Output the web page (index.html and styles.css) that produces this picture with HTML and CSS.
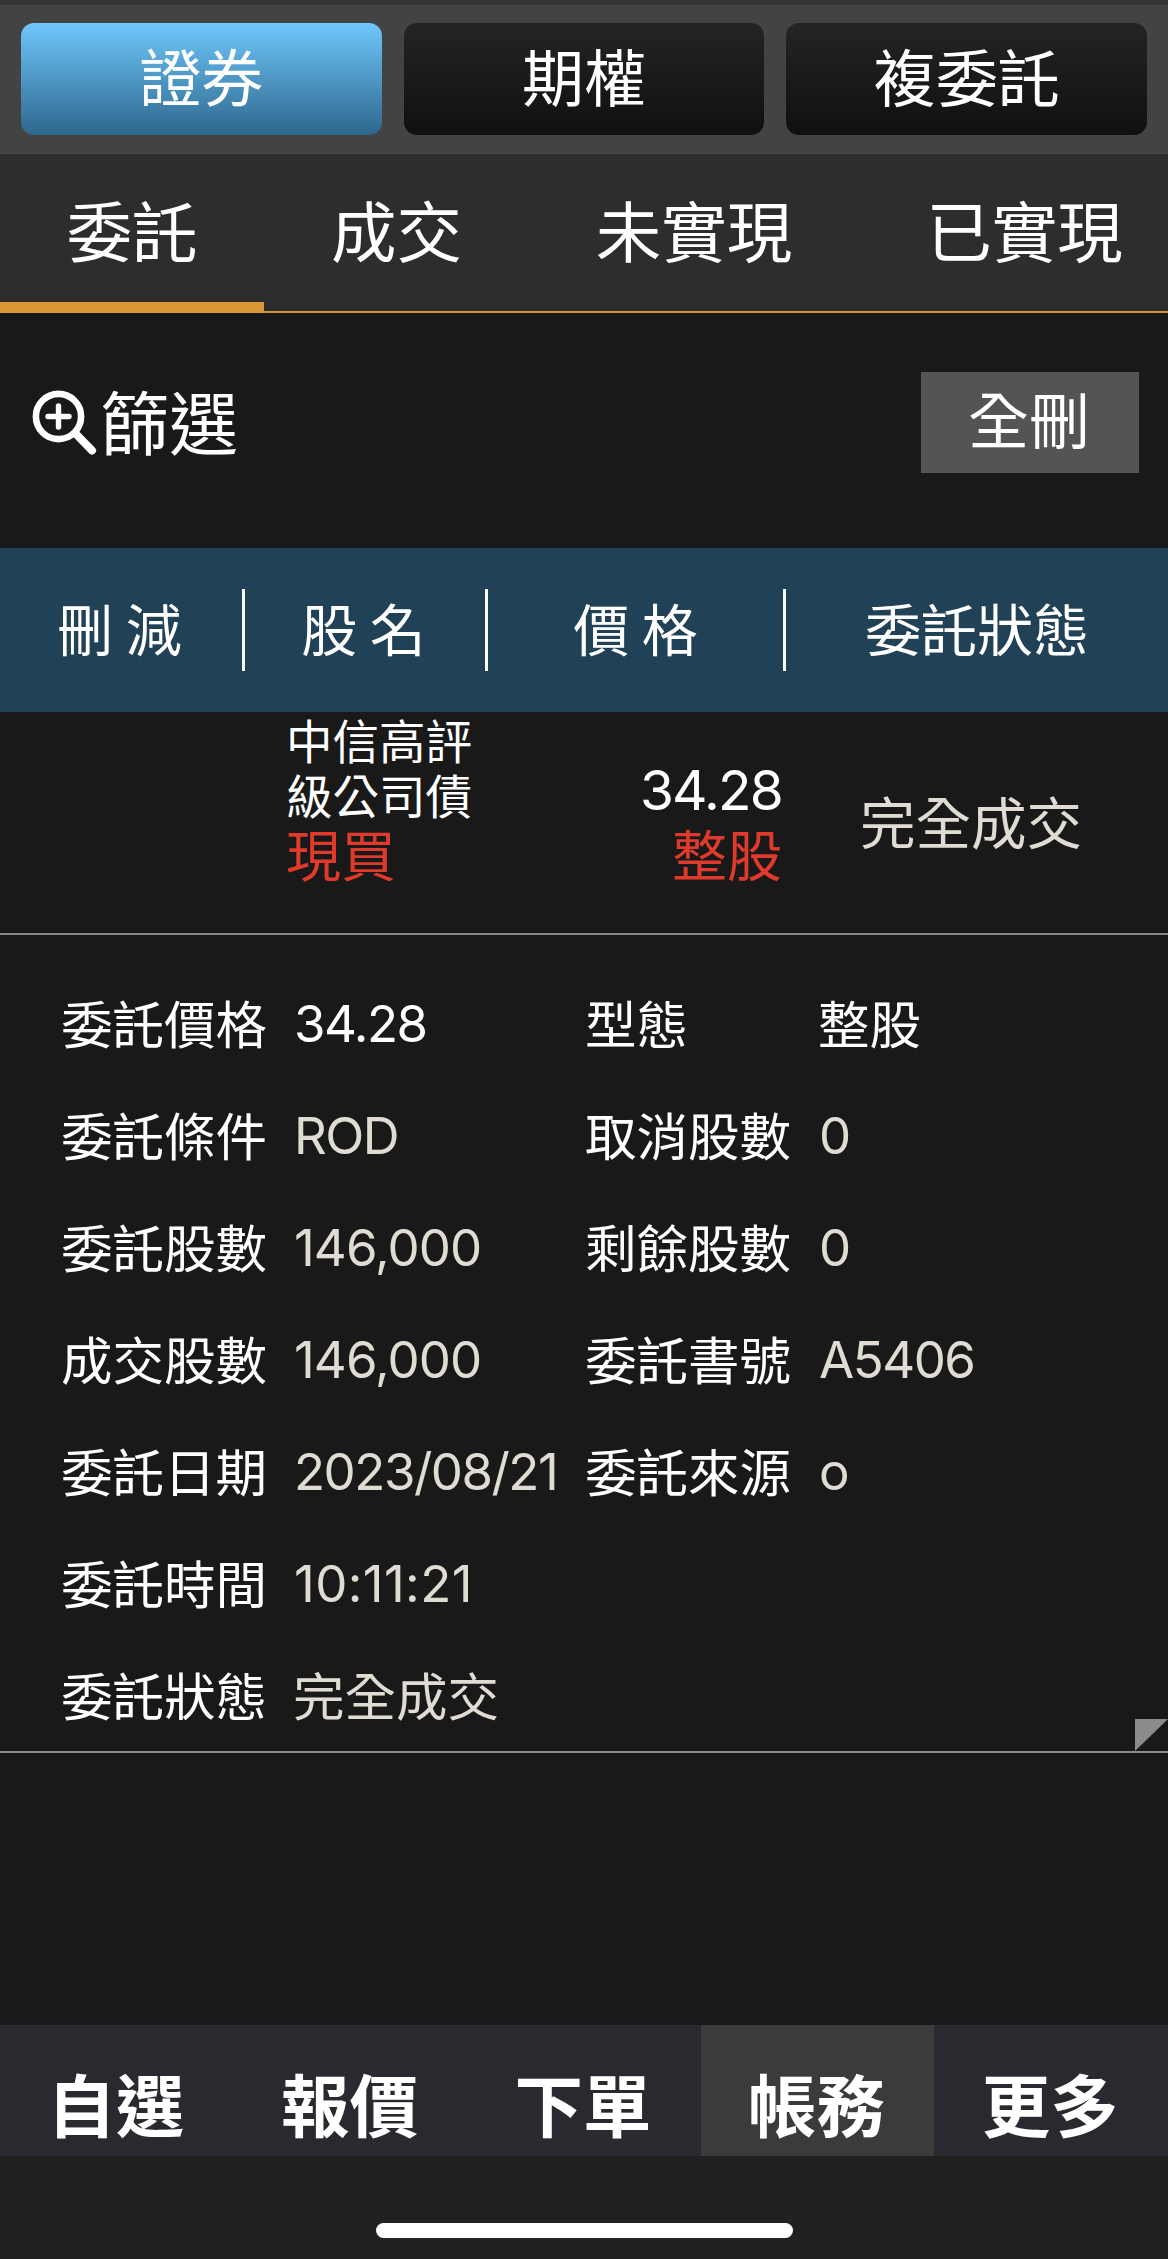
FILE: index.html
```html
<!DOCTYPE html>
<html lang="zh-Hant">
<head>
<meta charset="utf-8">
<title>帳務</title>
<link rel="stylesheet" href="styles.css">
</head>
<body>
<div class="app">
  <header class="markets">
    <button class="market market-active">證券</button>
    <button class="market">期權</button>
    <button class="market">複委託</button>
  </header>
  <nav class="tabs">
    <a class="tab tab-active">委託</a>
    <a class="tab">成交</a>
    <a class="tab tab-wide">未實現</a>
    <a class="tab tab-wide">已實現</a>
  </nav>
  <main class="content">
    <div class="toolbar">
      <div class="filter">
        <svg class="filter-icon" viewBox="0 0 66 66" fill="none" stroke="#fff" stroke-linecap="round">
          <circle cx="26.5" cy="26.5" r="22.6" stroke-width="6.6"/>
          <path d="M26.5 16V37M16 26.5H37" stroke-width="5.4"/>
          <path d="M43.5 43.5L60 60.5" stroke-width="8"/>
        </svg>
        <span class="filter-label">篩選</span>
      </div>
      <button class="delete-all">全刪</button>
    </div>
    <div class="columns">
      <div class="column">刪 減</div>
      <div class="column">股 名</div>
      <div class="column">價 格</div>
      <div class="column">委託狀態</div>
    </div>
    <div class="order">
      <div class="order-action"></div>
      <div class="order-name">
        <div class="stock">中信高評<br>級公司債</div>
        <div class="side">現買</div>
      </div>
      <div class="order-price">
        <div class="price">34.28</div>
        <div class="side">整股</div>
      </div>
      <div class="order-status">完全成交</div>
    </div>
    <div class="details">
      <span class="label">委託價格</span><span class="num bright">34.28</span>
      <span class="label">型態</span><span class="label">整股</span>
      <span class="label">委託條件</span><span class="num">ROD</span>
      <span class="label">取消股數</span><span class="num">0</span>
      <span class="label">委託股數</span><span class="num amount">146,000</span>
      <span class="label">剩餘股數</span><span class="num">0</span>
      <span class="label">成交股數</span><span class="num amount">146,000</span>
      <span class="label">委託書號</span><span class="num">A5406</span>
      <span class="label">委託日期</span><span class="num">2023/08/21</span>
      <span class="label">委託來源</span><span class="num">o</span>
      <span class="label">委託時間</span><span class="num time">10:11:21</span>
      <span class="label">委託狀態</span><span class="label dim">完全成交</span>
      <svg class="corner" viewBox="0 0 33 32"><path d="M0 0H33L0 32Z" fill="#8b8b8b"/></svg>
    </div>
  </main>
  <footer class="bottom">
    <nav class="menu">
      <a class="menu-item">自選</a>
      <a class="menu-item">報價</a>
      <a class="menu-item">下單</a>
      <a class="menu-item menu-active">帳務</a>
      <a class="menu-item">更多</a>
    </nav>
    <div class="home"><div class="home-bar"></div></div>
  </footer>
</div>
</body>
</html>
```
FILE: styles.css
```css
* { box-sizing: border-box; }

body {
  margin: 0;
  background: #191919;
  color: #fff;
  font-family: "Noto Sans CJK TC", sans-serif;
}

button {
  border: 0;
  color: inherit;
  font-family: inherit;
}

.app {
  display: flex;
  flex-direction: column;
  height: 2259px;
  width: 1168px;
}

.markets {
  display: flex;
  gap: 22px;
  height: 154px;
  padding: 18px 21px 19px;
  border-top: 5px solid #333;
  background: #434343;
}

.market {
  flex: 1;
  height: 112px;
  padding: 0 0 8px;
  border-radius: 13px;
  background: linear-gradient(#242424, #101010);
  font-size: 62px;
  line-height: 90px;
}

.market-active { background: linear-gradient(#6fc7fc, #2e678d); }

.tabs {
  display: grid;
  grid-template-columns: 264px 265px 330px 1fr;
  height: 159px;
  background: linear-gradient(#d49436, #d49436) bottom / 100% 2px no-repeat #2d2d2d;
}

.tab {
  display: flex;
  align-items: center;
  justify-content: center;
  padding-top: 2px;
  border-bottom: 11px solid transparent;
  font-size: 65.5px;
  line-height: 90px;
}

.tab-active { border-color: #d99735; }
.tab-wide:last-child { padding-left: 22px; }

.content { flex: 1; }

.toolbar {
  display: flex;
  align-items: center;
  justify-content: space-between;
  height: 235px;
  padding: 0 29px 16px 32px;
}

.filter { display: flex; align-items: center; gap: 2px; }
.filter-icon { width: 66px; height: 66px; }

.filter-label {
  font-size: 69px;
  line-height: 90px;
  padding-bottom: 6px;
}

.delete-all {
  width: 218px;
  height: 101px;
  padding: 0 2px 9px 0;
  background: #545454;
  font-size: 61px;
  line-height: 86px;
}

.columns {
  display: grid;
  grid-template-columns: 245px 243px 298px 382px;
  align-items: center;
  height: 164px;
  background: #214256;
}

.column {
  height: 82px;
  padding-bottom: 6px;
  border-right: 3px solid #fff;
  font-size: 56px;
  line-height: 76px;
  text-align: center;
}

.column:nth-child(-n+2) { padding-right: 3px; }
.column:last-child { border-right: 0; }

.order {
  display: grid;
  grid-template-columns: 286px 202px 294px 386px;
  height: 223px;
  border-bottom: 2px solid #8a8686;
}

.stock { font-size: 46.5px; line-height: 55px; margin-top: -1px; white-space: nowrap; }
.side { color: #e03a2c; font-size: 55px; line-height: 62px; }
.order-price { text-align: right; padding-top: 45px; }

.price {
  font-family: Inter, sans-serif;
  font-size: 55px;
  line-height: 66px;
  letter-spacing: -1.8px;
  margin-bottom: -2px;
}

.order-status {
  padding: 68px 0 0 78px;
  color: #e0dcd4;
  font-size: 55.5px;
  line-height: 80px;
}

.details {
  position: relative;
  display: grid;
  grid-template-columns: 232px 292px 233px 1fr;
  grid-auto-rows: 112px;
  height: 818px;
  padding: 33px 0 0 61px;
  border-bottom: 2px solid #8a8a8a;
}

.label { font-size: 51.5px; line-height: 107px; white-space: nowrap; }

.num {
  padding-left: 1px;
  color: #e0dcd4;
  font-family: Inter, sans-serif;
  font-size: 51px;
  line-height: 112px;
  letter-spacing: -1.5px;
  white-space: nowrap;
}

.bright { color: #fff; }
.dim { color: #e0dcd4; }
.amount { letter-spacing: -0.9px; }
.time { grid-column-end: span 3; letter-spacing: 0.4px; }

.corner {
  position: absolute;
  right: 0;
  bottom: 0;
  width: 33px;
  height: 32px;
}

.bottom { height: 234px; background: #212121; }

.menu {
  display: grid;
  grid-template-columns: repeat(5, 1fr);
  height: 131px;
  background: #292930;
}

.menu-item {
  padding: 29px 2px 0 0;
  font-size: 68.5px;
  font-weight: 700;
  line-height: 98px;
  text-align: center;
}

.menu-active { background: #3b3b3b; }

.home { display: flex; justify-content: center; padding-top: 67px; }

.home-bar {
  width: 417px;
  height: 15px;
  border-radius: 8px;
  background: #fff;
}
```
